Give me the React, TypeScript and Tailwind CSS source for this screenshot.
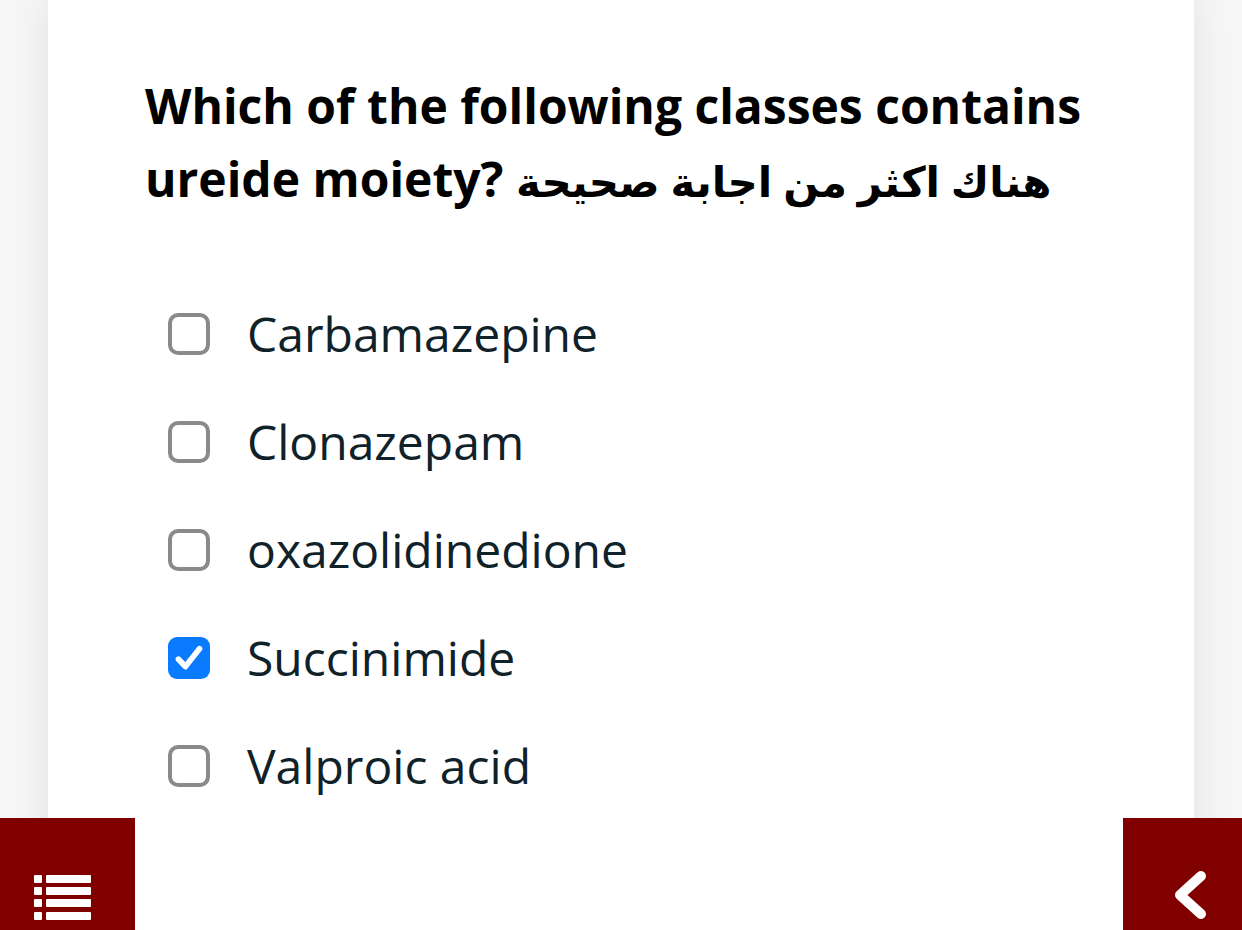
import { useState } from "react";

const options = [
  "Carbamazepine",
  "Clonazepam",
  "oxazolidinedione",
  "Succinimide",
  "Valproic acid",
];

function CheckBox({ checked }: { checked: boolean }) {
  if (checked) {
    return (
      <span className="flex h-[42px] w-[42px] shrink-0 items-center justify-center rounded-[9px] bg-[#0a7bff]">
        <svg viewBox="0 0 24 24" className="h-[36px] w-[36px]" fill="none">
          <path
            d="M5 12.8l4.6 4.9L19 5.8"
            stroke="white"
            strokeWidth="3.8"
            strokeLinecap="round"
            strokeLinejoin="round"
          />
        </svg>
      </span>
    );
  }
  return (
    <span className="block h-[42px] w-[42px] shrink-0 rounded-[10px] border-4 border-[#8a8a8a] bg-white" />
  );
}

export default function App() {
  const [selected, setSelected] = useState<string[]>(["Succinimide"]);

  const toggle = (option: string) =>
    setSelected((prev) =>
      prev.includes(option)
        ? prev.filter((o) => o !== option)
        : [...prev, option]
    );

  return (
    <div
      className="min-h-screen bg-[#f6f6f6]"
      style={{ fontFamily: '"Open Sans", "Noto Sans", "DejaVu Sans", sans-serif' }}
    >
      <div className="mx-[48px] min-h-screen bg-white px-[97px] pt-[69px] pb-[140px] shadow-[0_0_36px_rgba(0,0,0,0.09)]">
        <h1 className="text-[48px] font-bold leading-[73px] text-black">
          Which of the following classes contains ureide moiety?{" "}
          <span className="text-[42px]">هناك اكثر من اجابة صحيحة</span>
        </h1>
        <div className="mt-[81px] flex flex-col gap-[36px] pl-[23px]">
          {options.map((option) => (
            <label
              key={option}
              className="flex h-[72px] cursor-pointer items-center gap-[37px]"
              onClick={() => toggle(option)}
            >
              <CheckBox checked={selected.includes(option)} />
              <span className="text-[48px] leading-[72px] text-[#0f2129]">
                {option}
              </span>
            </label>
          ))}
        </div>
      </div>

      <button className="fixed bottom-0 left-0 flex h-[112px] w-[135px] items-start justify-center bg-[#800000] pt-[57px] pr-[10px]">
        <svg viewBox="0 0 57 45" className="h-[45px] w-[57px]" fill="white">
          <rect x="0" y="0" width="8" height="8" rx="1" />
          <rect x="12" y="0" width="45" height="8" rx="1" />
          <rect x="0" y="12" width="8" height="8" rx="1" />
          <rect x="12" y="12" width="45" height="8" rx="1" />
          <rect x="0" y="24" width="8" height="8" rx="1" />
          <rect x="12" y="24" width="45" height="8" rx="1" />
          <rect x="0" y="37" width="8" height="8" rx="1" />
          <rect x="12" y="37" width="45" height="8" rx="1" />
        </svg>
      </button>

      <button className="fixed bottom-0 right-0 flex h-[112px] w-[119px] items-start justify-center bg-[#800000] pt-[52px] pl-[16px]">
        <svg viewBox="0 0 40 50" className="h-[50px] w-[40px]" fill="none">
          <path
            d="M30 6L9 25l21 19"
            stroke="white"
            strokeWidth="10"
            strokeLinecap="round"
            strokeLinejoin="round"
          />
        </svg>
      </button>
    </div>
  );
}
